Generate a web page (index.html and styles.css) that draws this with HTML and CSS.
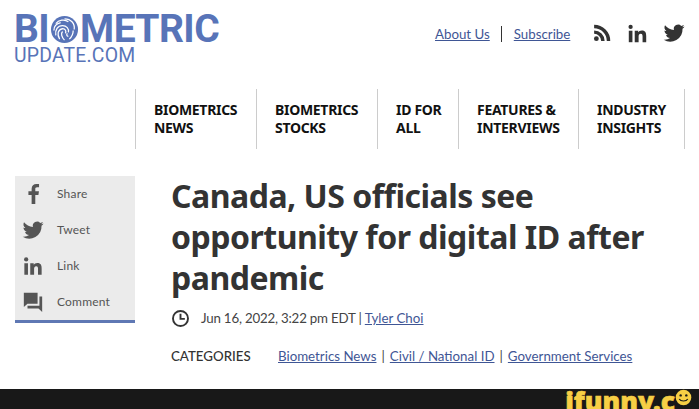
FILE: index.html
```html
<!DOCTYPE html>
<html lang="en">
<head>
    <meta charset="UTF-8">
    <title>Biometric Update</title>
    <link rel="stylesheet" href="styles.css">
</head>
<body>
    <header class="site-header">
        <a class="logo" href="#">
            <span class="logo-top">BI<svg class="logo-print" viewBox="0 0 30 30"><circle cx="15" cy="15" r="14" fill="#5874b8"/><g fill="none" stroke="#fff" stroke-width="1.3"><path d="M15 4c7 0 11 5 10 11"/><path d="M6 9c3-4 9-5 13-2"/><path d="M4 16c0-4 3-7 7-8"/><path d="M6 21c-1-6 2-10 7-10 4 0 7 3 6 7"/><path d="M10 25c-3-5-2-10 3-11 3 0 4 3 3 5"/><path d="M15 26c-3-3-4-7-2-9"/><path d="M20 25c3-3 4-6 4-9"/><path d="M19 22c-2 0-2-2-1-3"/></g></svg>METRIC</span>
            <span class="logo-bottom">UPDATE.COM</span>
        </a>
        <div class="top-links">
            <a href="#">About Us</a>
            <span class="top-sep"></span>
            <a href="#">Subscribe</a>
        </div>
        <div class="top-icons">
            <svg class="top-rss" viewBox="0 0 24 24"><circle cx="4.5" cy="19.5" r="3.2" fill="#333"/><path d="M1.5 8.5v4.6a9.4 9.4 0 0 1 9.4 9.4h4.6A14 14 0 0 0 1.5 8.5z" fill="#333"/><path d="M1.5 1v4.6a16.900 16.900 0 0 1 16.900 16.900H23A21.500 21.500 0 0 0 1.500 1z" fill="#333"/></svg>
            <svg class="top-in" viewBox="0 0 24 24"><use href="#icon-in"/></svg>
            <svg class="top-tw" viewBox="0 0 24 24"><use href="#icon-tw"/></svg>
        </div>
    </header>

    <nav class="main-nav">
        <a href="#">BIOMETRICS<br>NEWS</a>
        <a href="#">BIOMETRICS<br>STOCKS</a>
        <a href="#">ID FOR<br>ALL</a>
        <a href="#">FEATURES &amp;<br>INTERVIEWS</a>
        <a href="#">INDUSTRY<br>INSIGHTS</a>
    </nav>

    <main class="article">
        <aside class="share">
            <div class="share-row">
                <svg viewBox="0 0 24 24"><path d="M14.500 23V13h3.400l.6-4h-4V6.700c0-1.200.4-2 2-2h2.100V1.200C18.200 1.100 17 1 15.700 1c-3 0-5.200 1.800-5.200 5.300V9H7v4h3.500v10z" fill="#555"/></svg>
                <span>Share</span>
            </div>
            <div class="share-row">
                <svg viewBox="0 0 24 24"><use href="#icon-tw"/></svg>
                <span>Tweet</span>
            </div>
            <div class="share-row">
                <svg viewBox="0 0 28 28"><use href="#icon-in" x="2" y="2" width="24" height="24"/></svg>
                <span>Link</span>
            </div>
            <div class="share-row">
                <svg viewBox="0 0 24 24"><path d="M2 2h15v12H6l-4 3.500z" fill="#555"/><path d="M19 6h3v17l-4-4H6v-3h13z" fill="#555"/></svg>
                <span>Comment</span>
            </div>
        </aside>
        <div class="story">
            <h1>Canada, US officials see opportunity for digital ID after pandemic</h1>
            <p class="byline">
                <svg viewBox="0 0 24 24"><circle cx="12" cy="12" r="9.500" fill="none" stroke="#333" stroke-width="2.400"/><path d="M12 6v6.500h5.500" fill="none" stroke="#333" stroke-width="2.400"/></svg>
                <span><span class="date">Jun 16, 2022, 3:22 pm EDT | </span><a href="#">Tyler Choi</a></span>
            </p>
            <p class="categories">
                <span class="cat-label">CATEGORIES</span>
                <span class="cat-links"><a href="#">Biometrics News</a><i>|</i><a href="#">Civil / National ID</a><i>|</i><a href="#">Government Services</a></span>
            </p>
        </div>
    </main>

    <footer class="watermark">
        <span class="wm-text">ifunny.c</span>
        <svg class="wm-smile" viewBox="0 0 24 24"><circle cx="12" cy="12" r="11" fill="#f7cf45"/><circle cx="8" cy="9" r="1.700" fill="#181818"/><circle cx="16" cy="9" r="1.700" fill="#181818"/><path d="M6 14c2 4 10 4 12 0" fill="none" stroke="#181818" stroke-width="1.600"/></svg>
    </footer>

    <svg class="defs" width="0" height="0">
        <symbol id="icon-in" viewBox="0 0 24 24"><path d="M1 8.500h4.600V23H1z" fill="currentColor"/><circle cx="3.300" cy="3.700" r="2.700" fill="currentColor"/><path d="M8.500 8.500h4.400v2c.7-1.300 2.300-2.400 4.600-2.400 4.700 0 5.500 3 5.500 7V23h-4.600v-7c0-1.700 0-3.800-2.300-3.800s-2.700 1.800-2.700 3.700V23H8.500z" fill="currentColor"/></symbol>
        <symbol id="icon-tw" viewBox="0 0 24 24"><path d="M23.500 5c-.8.4-1.700.6-2.700.8 1-.6 1.700-1.500 2.100-2.600-.9.500-1.900.9-3 1.100a4.700 4.700 0 0 0-8 4.300C8 8.400 4.500 6.500 2.200 3.600c-1.200 2.200-.6 4.900 1.500 6.300-.8 0-1.500-.2-2.100-.6 0 2.300 1.600 4.300 3.800 4.700-.7.200-1.400.2-2.100.1.600 1.900 2.300 3.200 4.400 3.300A9.500 9.500 0 0 1 .7 19.300a13.400 13.400 0 0 0 20.600-11.900c.9-.7 1.700-1.500 2.200-2.400z" fill="currentColor"/></symbol>
    </svg>
</body>
</html>
```

FILE: styles.css
```css
html, body {
    height: 100%;
}

body {
    margin: 0;
    width: 699px;
    height: 409px;
    overflow: hidden;
    display: flex;
    flex-direction: column;
    background-color: #fff;
    color: #333;
    font-family: 'Lato', sans-serif;
}

a {
    color: #3f5695;
}

/* Header */
.site-header {
    display: flex;
    align-items: flex-start;
    height: 89px;
    padding-left: 14px;
    box-sizing: border-box;
}

.logo {
    display: flex;
    flex-direction: column;
    width: 260px;
    padding-top: 12px;
    color: #5874b8;
    text-decoration: none;
}

.logo-top {
    display: flex;
    align-items: center;
    height: 34px;
    line-height: 34px;
    font-family: 'Roboto', sans-serif;
    font-weight: 700;
    font-size: 39px;
    letter-spacing: -0.6px;
}

.logo-print {
    width: 29px;
    height: 29px;
    margin: 0 1px;
}

.logo-bottom {
    font-family: 'Roboto', sans-serif;
    font-size: 19.400px;
    line-height: 20px;
    letter-spacing: 0.2px;
}

.top-links {
    display: flex;
    align-items: center;
    gap: 11px;
    margin-left: 161px;
    margin-top: 24px;
    font-size: 13.300px;
    line-height: 20px;
}

.top-sep {
    width: 1px;
    height: 16px;
    margin-right: 1px;
    background-color: #333;
}

.top-icons {
    display: flex;
    align-items: center;
    margin-left: 23px;
    margin-top: 22px;
    color: #333;
}

.top-icons svg {
    display: block;
}

.top-rss {
    width: 18px;
    height: 18px;
    margin-right: 17px;
}

.top-in {
    width: 19px;
    height: 19px;
    margin-right: 16px;
}

.top-tw {
    width: 22px;
    height: 22px;
}

/* Main nav */
.main-nav {
    display: flex;
    height: 60px;
    margin-left: 135px;
    width: 549px;
    border-left: 1px solid #ccc;
}

.main-nav a {
    padding: 12px 18px 0;
    border-right: 1px solid #ccc;
    box-sizing: border-box;
    font-family: 'Noto Sans', sans-serif;
    font-weight: 700;
    font-size: 14px;
    line-height: 18px;
    letter-spacing: -0.3px;
    color: #111;
    text-decoration: none;
    white-space: nowrap;
}

.main-nav a:nth-child(1), .main-nav a:nth-child(2) {
    width: 121px;
}

.main-nav a:nth-child(3) {
    width: 81px;
}

.main-nav a:nth-child(4) {
    width: 120px;
}

.main-nav a:nth-child(5) {
    width: 106px;
}

/* Article */
.article {
    display: flex;
    margin-top: 27px;
    padding-left: 15px;
    flex: 1;
}

.share {
    width: 120px;
    height: 144px;
    background-color: #ebebeb;
    border-bottom: 3px solid #5f78b4;
    color: #555;
}

.share-row {
    display: flex;
    align-items: center;
    height: 36px;
    padding-left: 7px;
    font-size: 12px;
    letter-spacing: 0.2px;
}

.share-row span {
    position: relative;
    top: -1px;
}

.share-row svg {
    width: 22px;
    height: 22px;
    margin-right: 13px;
    color: #555;
}

.story {
    margin-left: 36px;
}

h1 {
    margin: -1px 0 0;
    width: 500px;
    font-family: 'Noto Sans', sans-serif;
    font-weight: 700;
    font-size: 32px;
    line-height: 41px;
    letter-spacing: -0.5px;
    color: #333;
}

.byline {
    display: flex;
    align-items: center;
    margin: 10px 0 0;
    font-size: 13.300px;
    line-height: 20px;
    color: #444;
}

.byline svg {
    width: 19px;
    height: 19px;
    margin-right: 11px;
}

.date {
    letter-spacing: -0.2px;
}

.categories {
    display: flex;
    margin: 18px 0 0;
    font-size: 13.300px;
    line-height: 20px;
}

.cat-label {
    width: 107px;
    color: #333;
    font-weight: 500;
}

.cat-links i {
    margin: 0 5px;
    font-style: normal;
    color: #444;
}

/* Bottom bar */
.watermark {
    position: absolute;
    left: 0;
    top: 389px;
    width: 699px;
    height: 20px;
    display: flex;
    justify-content: flex-end;
    align-items: flex-start;
    background-color: #181818;
    overflow: hidden;
    box-sizing: border-box;
    padding-right: 7px;
}

.wm-text {
    font-family: 'Noto Sans', sans-serif;
    font-weight: 900;
    font-size: 26.500px;
    line-height: 25px;
    color: #f7cf45;
    -webkit-text-stroke: 0.6px #f7cf45;
}

.wm-smile {
    width: 17px;
    height: 17px;
}

.defs {
    position: absolute;
}
```
